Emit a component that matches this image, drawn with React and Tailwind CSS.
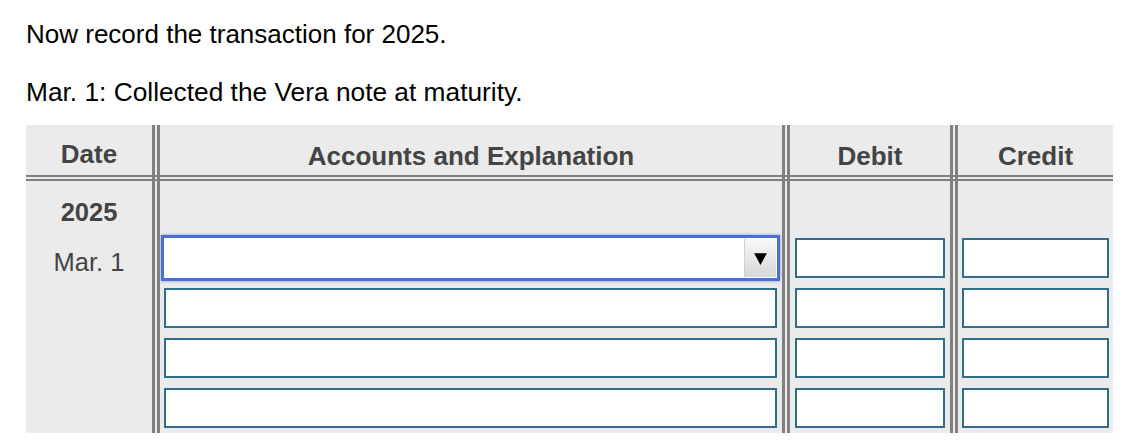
export default function App() {
  const font = { fontFamily: '"Liberation Sans", Arial, sans-serif' };
  const Sep = () => (
    <div className="w-[8px] shrink-0 self-stretch border-x-[3px] border-[#808080]" />
  );
  const Field = ({ cls }) => (
    <div className={'h-[40px] border-2 border-[#2f6f8c] bg-white ' + cls} />
  );
  const rows = [0, 1, 2, 3];

  return (
    <div className="min-h-screen bg-white text-black" style={font}>
      <div className="pl-[26px] pt-[19px]">
        <p className="text-[26px] leading-[30px]">Now record the transaction for 2025.</p>
        <p className="mt-[28px] text-[26.3px] leading-[30px]">Mar. 1: Collected the Vera note at maturity.</p>

        <div className="mt-[18px] w-[1087px] bg-[#ebebeb] text-[#444]">
          {/* header */}
          <div className="flex h-[50px] text-[26px] font-bold">
            <div className="flex w-[126px] items-center justify-center pt-[8px]">Date</div>
            <Sep />
            <div className="flex w-[622px] items-center justify-center pt-[12px]">Accounts and Explanation</div>
            <Sep />
            <div className="flex w-[160px] items-center justify-center pt-[12px]">Debit</div>
            <Sep />
            <div className="flex flex-1 items-center justify-center pt-[12px]">Credit</div>
          </div>
          <div className="flex h-[6px] border-y-2 border-[#808080]">
            <div className="w-[126px]" />
            <Sep />
            <div className="w-[622px]" />
            <Sep />
            <div className="w-[160px]" />
            <Sep />
            <div className="flex-1" />
          </div>

          {/* body */}
          <div className="flex">
            <div className="w-[126px] text-[25.5px]">
              <div className="h-[52px] pt-[16px] text-center font-bold leading-[30px]">2025</div>
              <div className="h-[50px] pt-[14px] text-center leading-[30px]">Mar. 1</div>
            </div>
            <Sep />
            <div className="w-[622px] pt-[52px]">
              {rows.map((r) =>
                r === 0 ? (
                  <div key={r} className="flex h-[50px] items-center pl-[1px] pr-[2px]">
                    <div className="flex h-[46px] w-full items-stretch border-[3px] border-[#4a6ed6] bg-white shadow-[0_0_3px_#7d98ea]">
                      <div className="flex-1" />
                      <div className="my-[1px] mr-[1px] flex w-[32px] items-center justify-center border-l border-[#d0d0d0] bg-gradient-to-b from-[#f8f8f8] to-[#d8d8d8]">
                        <svg width="15" height="15" viewBox="0 0 14 14">
                          <path d="M1 2 L13 2 L7 13 Z" fill="#000" />
                        </svg>
                      </div>
                    </div>
                  </div>
                ) : (
                  <div key={r} className="flex h-[50px] items-center pl-[4px] pr-[5px]">
                    <Field cls="w-full" />
                  </div>
                )
              )}
            </div>
            <Sep />
            <div className="w-[160px] pt-[52px]">
              {rows.map((r) => (
                <div key={r} className="flex h-[50px] items-center pl-[5px] pr-[5px]">
                  <Field cls="w-full" />
                </div>
              ))}
            </div>
            <Sep />
            <div className="flex-1 pt-[52px]">
              {rows.map((r) => (
                <div key={r} className="flex h-[50px] items-center pl-[4px] pr-[4px]">
                  <Field cls="w-full" />
                </div>
              ))}
            </div>
          </div>
        </div>
      </div>
    </div>
  );
}
